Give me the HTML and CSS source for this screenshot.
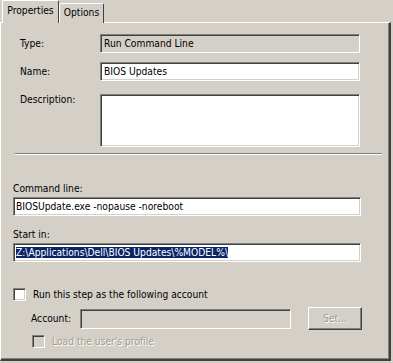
FILE: index.html
```html
<!DOCTYPE html>
<html lang="en">
<head>
    <meta charset="UTF-8">
    <title>Properties</title>
    <link rel="stylesheet" href="styles.css">
</head>
<body>
    <div class="dialog">
        <div class="tabs">
            <div class="tab active">Properties</div>
            <div class="tab">Options</div>
        </div>
        <div class="panel">
            <div class="grid">
                <label>Type:</label>
                <div class="field readonly">Run Command Line</div>
                <label>Name:</label>
                <div class="field">BIOS Updates</div>
                <label class="top">Description:</label>
                <div class="field area"></div>
            </div>
            <div class="separator"></div>
            <div class="block">
                <label>Command line:</label>
                <div class="field wide">BIOSUpdate.exe -nopause -noreboot</div>
            </div>
            <div class="block">
                <label>Start in:</label>
                <div class="field wide"><span class="selected">Z:\Applications\Dell\BIOS Updates\%MODEL%\</span></div>
            </div>
            <div class="check-row">
                <span class="checkbox"></span>
                <span>Run this step as the following account</span>
            </div>
            <div class="account-row">
                <label>Account:</label>
                <div class="field readonly account"></div>
                <button class="set-btn" disabled>Set...</button>
            </div>
            <div class="check-row sub disabled">
                <span class="checkbox off"></span>
                <span>Load the user's profile</span>
            </div>
        </div>
    </div>
</body>
</html>
```
FILE: styles.css
```css
/* dialog estilo windows classico */
body {
    margin: 0;
    background-color: #d4d0c8;
    font-family: "DejaVu Sans Condensed", "Liberation Sans", Arial, sans-serif;
    font-size: 10.2px;
    color: #000;
    overflow: hidden;
}

.dialog {
    width: 391px;
    height: 361px;
}

.tabs {
    display: flex;
    height: 22px;
    padding-left: 2px;
    position: relative;
    z-index: 1;
}

.tab {
    box-sizing: border-box;
    margin-top: 3px;
    height: 20px;
    width: 45px;
    padding-top: 3px;
    text-align: center;
    border-left: 1px solid #fff;
    border-top: 1px solid #fff;
    border-right: 1px solid #404040;
    border-radius: 2px 2px 0 0;
    background-color: #d4d0c8;
}

.tab.active {
    margin-top: 0;
    height: 23px;
    width: 57px;
    padding-top: 4px;
}

.panel {
    box-sizing: border-box;
    height: 339px;
    border-top: 1px solid #fff;
    border-left: 1px solid #fff;
    border-right: 2px solid #404040;
    border-bottom: 2px solid #404040;
    box-shadow: inset -1px -1px 0 #808080;
    padding: 11px 0 0 12px;
}

.grid {
    display: grid;
    grid-template-columns: 80px 260px;
    row-gap: 9px;
    padding-left: 7px;
    align-items: center;
}

.grid .top {
    align-self: start;
    padding-top: 4px;
}

.field {
    box-sizing: border-box;
    height: 19px;
    border-top: 1px solid #808080;
    border-left: 1px solid #808080;
    border-right: 1px solid #fff;
    border-bottom: 1px solid #fff;
    box-shadow: inset 1px 1px 0 #404040, inset -1px -1px 0 #d4d0c8;
    background-color: #fff;
    padding: 3px 3px 0 3px;
    white-space: nowrap;
    overflow: hidden;
}

.field.readonly {
    background-color: #d4d0c8;
}

.field.area {
    height: 53px;
    margin-top: 4px;
}

.separator {
    margin: 6px 7px 0 2px;
    height: 0;
    border-top: 1px solid #808080;
    border-bottom: 1px solid #fff;
}

.block {
    margin-top: 28px;
}

.block + .block {
    margin-top: 13px;
}

.block label {
    display: block;
    margin-bottom: 3px;
}

.field.wide {
    width: 348px;
    padding-left: 2px;
}

.selected {
    background-color: #0a246a;
    color: #fff;
}

.check-row {
    display: flex;
    align-items: center;
    gap: 7px;
    margin-top: 26px;
}

.checkbox {
    box-sizing: border-box;
    width: 13px;
    height: 13px;
    background-color: #fff;
    border-top: 1px solid #808080;
    border-left: 1px solid #808080;
    border-right: 1px solid #fff;
    border-bottom: 1px solid #fff;
    box-shadow: inset 1px 1px 0 #404040, inset -1px -1px 0 #d4d0c8;
}

.checkbox.off {
    background-color: #d4d0c8;
}

.account-row {
    display: flex;
    align-items: center;
    margin-top: 6px;
    padding-left: 18px;
}

.account-row label {
    width: 49px;
}

.field.account {
    width: 211px;
    height: 20px;
}

.set-btn {
    box-sizing: border-box;
    margin-left: 17px;
    width: 54px;
    height: 23px;
    font-family: inherit;
    font-size: 10.2px;
    color: #a09c94;
    text-shadow: 1px 1px 0 #fff;
    background-color: #d4d0c8;
    border-top: 1px solid #fff;
    border-left: 1px solid #fff;
    border-right: 1px solid #404040;
    border-bottom: 1px solid #404040;
    box-shadow: inset -1px -1px 0 #808080;
    padding: 0;
}

.check-row.sub {
    margin-top: 5px;
    padding-left: 19px;
}

.disabled {
    color: #a09c94;
    text-shadow: 1px 1px 0 #fff;
}
```
